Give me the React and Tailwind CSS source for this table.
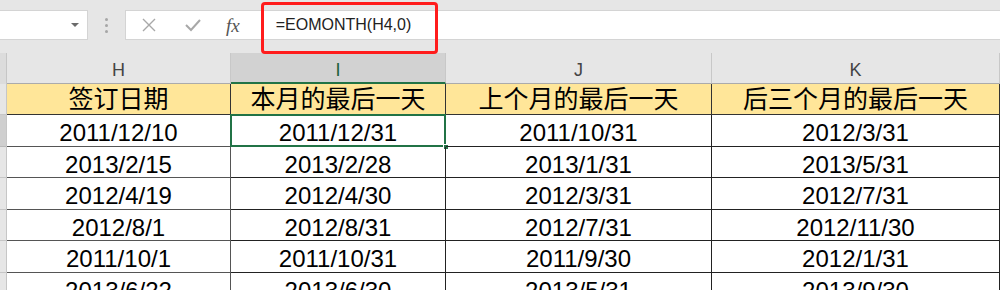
import React from 'react'

const cols = ['H', 'I', 'J', 'K']
const titles = ['签订日期', '本月的最后一天', '上个月的最后一天', '后三个月的最后一天']
const rows = [
  ['2011/12/10', '2011/12/31', '2011/10/31', '2012/3/31'],
  ['2013/2/15', '2013/2/28', '2013/1/31', '2013/5/31'],
  ['2012/4/19', '2012/4/30', '2012/3/31', '2012/7/31'],
  ['2012/8/1', '2012/8/31', '2012/7/31', '2012/11/30'],
  ['2011/10/1', '2011/10/31', '2011/9/30', '2012/1/31'],
  ['2013/6/22', '2013/6/30', '2013/5/31', '2013/9/30'],
]

export default function App() {
  return (
    <div className="w-[1000px] h-[290px] overflow-hidden bg-[#e6e6e6] font-['Liberation_Sans','Noto_Sans_CJK_SC',sans-serif] text-black">
      {/* formula bar */}
      <div className="relative h-[53px] flex items-start pt-[10px]">
        <div className="w-[88px] h-[30px] bg-white border border-l-0 border-[#d4d4d4] flex items-center justify-end pr-[8px]">
          <div className="w-0 h-0 border-l-[4px] border-r-[4px] border-t-[4px] border-l-transparent border-r-transparent border-t-[#6b6b6b]" />
        </div>
        <div className="w-[37px] h-[30px] flex flex-col items-center justify-center gap-[3px]">
          <div className="w-[3px] h-[3px] rounded-full bg-[#a6a6a6]" />
          <div className="w-[3px] h-[3px] rounded-full bg-[#a6a6a6]" />
          <div className="w-[3px] h-[3px] rounded-full bg-[#a6a6a6]" />
        </div>
        <div className="flex-1 h-[30px] bg-white border border-r-0 border-[#d4d4d4] flex items-center">
          <svg className="ml-[16px]" width="14" height="14" viewBox="0 0 14 14">
            <path d="M1 1 L13 13 M13 1 L1 13" stroke="#a8a8a8" strokeWidth="1.4" fill="none" />
          </svg>
          <svg className="ml-[29px]" width="16" height="14" viewBox="0 0 16 14">
            <path d="M1 7 L6 12 L15 2" stroke="#a8a8a8" strokeWidth="2" fill="none" />
          </svg>
          <span className="ml-[25px] font-['Liberation_Serif',serif] italic text-[19px] text-[#555] leading-none">fx</span>
          <span className="ml-[36px] text-[16px] text-[#222] leading-none">=EOMONTH(H4,0)</span>
        </div>
        <div className="absolute left-[261px] top-[2px] w-[177px] h-[52px] border-[3px] border-[#ff1c1c] rounded-[4px]" />
      </div>

      {/* sheet */}
      <div className="flex">
        <div className="w-[7px] flex flex-col border-r border-[#c6c6c6]">
          <div className="h-[31px] bg-[#dcdcdc]" />
          <div className="h-[31px] bg-[#e6e6e6] border-b border-[#c6c6c6]" />
          <div className="h-[31.5px] bg-[#cfcfcf] border-b border-[#b8b8b8]" />
          {rows.slice(1).map((_, i) => (
            <div key={i} className="h-[31.5px] border-b border-[#c6c6c6]" />
          ))}
        </div>
        <div className="flex-1 grid grid-cols-[224px_215px_266px_288px] bg-white">
          {cols.map((c, i) => (
            <div
              key={c}
              className={
                'h-[31px] flex items-center justify-center pt-[5px] text-[18px] border-r border-[#c8c8c8] ' +
                (i === 1
                  ? 'bg-[#d2d2d2] text-[#1e5e3a] border-b-2 border-b-[#217346]'
                  : 'bg-[#e6e6e6] text-[#444] border-b border-b-[#ababab]')
              }
            >
              {c}
            </div>
          ))}
          {titles.map((t, i) => (
            <div
              key={t}
              className="h-[31px] flex items-center justify-center bg-[#ffe699] text-[25px] leading-none border-r border-b border-[#333]"
            >
              {t}
            </div>
          ))}
          {rows.map((r, ri) =>
            r.map((v, ci) => (
              <div
                key={ri + '-' + ci}
                className={
                  'relative h-[31.5px] flex items-center justify-center pt-[6px] text-[24px] leading-none border-r border-b ' +
                  (ci === 0 ? 'border-[#555]' : 'border-[#222]')
                }
              >
                {v}
                {ri === 0 && ci === 1 && (
                  <>
                    <div className="absolute -left-px -top-px -right-px -bottom-px border-2 border-[#217346]" />
                    <div className="absolute -right-[4px] -bottom-[4px] w-[6px] h-[6px] bg-[#217346] border border-white" />
                  </>
                )}
              </div>
            ))
          )}
        </div>
      </div>
    </div>
  )
}
